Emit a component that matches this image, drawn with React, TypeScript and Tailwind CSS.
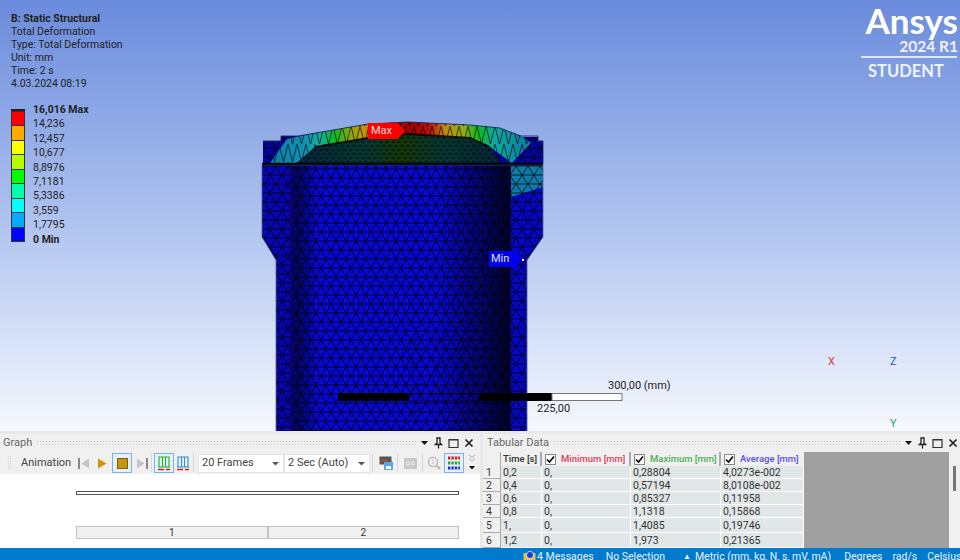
const uiFont = "font-['Roboto','Noto_Sans',sans-serif]";

const legendColors = [
  'bg-[#ff0000]',
  'bg-[#ffaa00]',
  'bg-[#ffff00]',
  'bg-[#b4ff00]',
  'bg-[#00ff00]',
  'bg-[#00ffaa]',
  'bg-[#00ffff]',
  'bg-[#00aaff]',
  'bg-[#0000ff]',
];

const legendLabels = ['14,236', '12,457', '10,677', '8,8976', '7,1181', '5,3386', '3,559', '1,7795'];

const rows = [
  { n: '1', time: '0,2', min: '0,', max: '0,28804', avg: '4,0273e-002', h: 'h-[13px] leading-[14px]' },
  { n: '2', time: '0,4', min: '0,', max: '0,57194', avg: '8,0108e-002', h: 'h-[13px] leading-[14px]' },
  { n: '3', time: '0,6', min: '0,', max: '0,85327', avg: '0,11958', h: 'h-[13px] leading-[14px]' },
  { n: '4', time: '0,8', min: '0,', max: '1,1318', avg: '0,15868', h: 'h-[13px] leading-[14px]' },
  { n: '5', time: '1,', min: '0,', max: '1,4085', avg: '0,19746', h: 'h-[15px] leading-[16px]' },
  { n: '6', time: '1,2', min: '0,', max: '1,973', avg: '0,21365', h: 'h-[15px] leading-[16px]' },
];

function Model() {
  const body = 'M262 165H543V237L527 260V431H276V260L262 237Z';
  const capBase = 'M263 141H281V136H298L310 134L368 124L408 122L470 125L500 128L520 137H538V141H543V164H263Z';
  const band = 'M270 163L287 139L310 134L368 124L408 122L470 125L500 128L520 135L531 143L512 163L490 147L470 139L408 135L368 139L315 147L297 163Z';
  const dome = 'M297 163L315 147L368 139L408 135L470 139L490 147L500 163Z';
  return (
    <svg className="absolute inset-0 blur-[0.4px]" width="960" height="431" viewBox="0 0 960 431">
      <defs>
        <pattern id="meshBody" x="296" y="165" width="10" height="18" patternUnits="userSpaceOnUse">
          <path d="M0 4H10M0 13H10M0 4L5 13L10 4M5 13L2.2 18M5 13L7.8 18M2.2 0L0 4M7.8 0L10 4" stroke="#000" strokeOpacity="0.78" strokeWidth="1" fill="none" />
        </pattern>
        <pattern id="meshFine" width="6" height="8" patternUnits="userSpaceOnUse">
          <path d="M0 2H6M0 6H6M0 2L3 6L6 2M3 6L1.5 8M3 6L4.5 8M1.5 0L0 2M4.5 0L6 2" stroke="#000" strokeOpacity="0.75" strokeWidth="0.6" fill="none" />
        </pattern>
        <pattern id="meshLarge" width="12" height="18" patternUnits="userSpaceOnUse">
          <path d="M0 4H12M0 13H12M0 4L6 13L12 4M6 13L3.2 18M6 13L8.8 18M3.2 0L0 4M8.8 0L12 4" stroke="#000" strokeOpacity="0.8" strokeWidth="0.9" fill="none" />
        </pattern>
        <pattern id="meshFree" x="400" y="330" width="26" height="24" patternUnits="userSpaceOnUse">
          <path d="M3 2L13 10L8 22M13 10L23 5M13 10L22 21" stroke="#000" strokeOpacity="0.55" strokeWidth="0.8" fill="none" />
        </pattern>
        <pattern id="meshCap" width="9" height="18" patternUnits="userSpaceOnUse">
          <path d="M0 0L4.5 18L9 0" stroke="#000" strokeOpacity="0.7" strokeWidth="0.9" fill="none" />
        </pattern>
        <linearGradient id="bandColors" x1="270" x2="540" y1="0" y2="0" gradientUnits="userSpaceOnUse">
          <stop offset="0" stopColor="#0c7fa6" />
          <stop offset="0.13" stopColor="#1090b0" />
          <stop offset="0.185" stopColor="#10b0a0" />
          <stop offset="0.24" stopColor="#10b820" />
          <stop offset="0.3" stopColor="#8ca810" />
          <stop offset="0.35" stopColor="#c8920c" />
          <stop offset="0.4" stopColor="#c02008" />
          <stop offset="0.52" stopColor="#a00000" />
          <stop offset="0.59" stopColor="#b81008" />
          <stop offset="0.65" stopColor="#c08c10" />
          <stop offset="0.72" stopColor="#88b010" />
          <stop offset="0.77" stopColor="#10b820" />
          <stop offset="0.83" stopColor="#10a8a0" />
          <stop offset="0.96" stopColor="#0d7aa2" />
        </linearGradient>
        <linearGradient id="domeColors" x1="297" x2="500" y1="0" y2="0" gradientUnits="userSpaceOnUse">
          <stop offset="0" stopColor="#052c3e" />
          <stop offset="0.35" stopColor="#064038" />
          <stop offset="0.52" stopColor="#173e06" />
          <stop offset="0.7" stopColor="#064038" />
          <stop offset="1" stopColor="#052c3e" />
        </linearGradient>
        <linearGradient id="bodyShade" x1="262" x2="543" y1="0" y2="0" gradientUnits="userSpaceOnUse">
          <stop offset="0" stopColor="#000" stopOpacity="0.15" />
          <stop offset="0.09" stopColor="#000" stopOpacity="0.2" />
          <stop offset="0.125" stopColor="#000" stopOpacity="0.55" />
          <stop offset="0.2" stopColor="#000" stopOpacity="0" />
          <stop offset="0.62" stopColor="#000" stopOpacity="0" />
          <stop offset="0.882" stopColor="#000" stopOpacity="0.8" />
          <stop offset="0.888" stopColor="#000" stopOpacity="0.1" />
          <stop offset="1" stopColor="#000" stopOpacity="0.1" />
        </linearGradient>
      </defs>

      {/* body */}
      <path d={body} fill="#0808d4" />
      <path d={body} fill="url(#meshBody)" />
      <path d="M262 165H292V431H276V260L262 237Z" fill="#0808d4" />
      <path d="M262 165H292V431H276V260L262 237Z" fill="url(#meshLarge)" />
      <path d="M511 165H543V237L527 260V431H511Z" fill="#0808d4" />
      <path d="M511 165H543V237L527 260V431H511Z" fill="url(#meshLarge)" />
      <path d="M400 330H480V431H400Z" fill="url(#meshFree)" />
      <path d={body} fill="url(#bodyShade)" />
      <path d="M511 166H543V187L511 197Z" fill="#0f7aa6" />
      <path d="M511 166H543V187L511 197Z" fill="url(#meshLarge)" />
      <path d="M262 165H543V237L527 260V431M276 431V260L262 237V165" fill="none" stroke="#555d80" strokeWidth="0.8" />

      {/* cap */}
      <path d={capBase} fill="#05059c" />
      <path d={capBase} fill="url(#meshLarge)" />
      <path d={band} fill="url(#bandColors)" />
      <path d={band} fill="url(#meshCap)" />
      <path d={dome} fill="url(#domeColors)" />
      <path d={dome} fill="url(#meshFine)" />
      <path d="M315 147L368 138L408 134L470 138L490 147" fill="none" stroke="#000" strokeOpacity="0.85" strokeWidth="1.8" />
      <path d="M262 164H543" stroke="#000" strokeOpacity="0.9" strokeWidth="2.6" />
      <path d="M263 141H281V136H298L310 134L368 124L408 122L470 125L500 128L520 136H538V141H543V164" fill="none" stroke="#222a55" strokeWidth="0.9" />

      {/* scale bar */}
      <rect x="338" y="393" width="71" height="8" fill="#000" />
      <path d="M409 393.5H479M409 401H479" stroke="#000" strokeOpacity="0.7" />
      <rect x="479" y="393" width="73" height="8" fill="#000" />
      <rect x="552" y="393.5" width="70" height="7" fill="#fff" stroke="#777" strokeWidth="1" />
    </svg>
  );
}

function Legend() {
  return (
    <div className="absolute left-[11px] top-[103px] flex gap-[8px] text-[10.5px] leading-[14.4px] text-[#222]">
      <div className="mt-[6px] flex h-[133px] w-[14px] flex-col border-t-[2px] border-[#222] bg-[#333] p-[1px] pt-0">
        {legendColors.map((color) => (
          <div key={color} className={`${color} mt-[1px] flex-1`} />
        ))}
      </div>
      <div className="flex flex-col">
        <span className="font-bold">16,016 Max</span>
        {legendLabels.map((label) => (
          <span key={label}>{label}</span>
        ))}
        <span className="font-bold">0 Min</span>
      </div>
    </div>
  );
}

function PaneButtons() {
  return (
    <div className="flex items-center gap-[5px] text-[#222]">
      <svg width="9" height="12" viewBox="0 0 9 12"><path d="M1 4H8L4.5 8Z" fill="#111" /></svg>
      <svg width="9" height="12" viewBox="0 0 9 12"><path d="M3 1H6V6L7.5 7.5H1.5L3 6ZM4.5 7.5V11.5" fill="none" stroke="#222" strokeWidth="1.3" /></svg>
      <svg width="11" height="12" viewBox="0 0 11 12"><path d="M1 2.5H10V10.5H1ZM1 3H10" fill="none" stroke="#333" strokeWidth="1.2" /></svg>
      <svg width="10" height="12" viewBox="0 0 10 12"><path d="M1.5 2.5L8.5 9.5M8.5 2.5L1.5 9.5" stroke="#222" strokeWidth="1.7" /></svg>
    </div>
  );
}

function PaneHeader({ title, padRight }: { title: string; padRight: string }) {
  return (
    <div className={`${padRight} flex h-[18px] items-center gap-[4px] bg-[#f0f0f0] text-[11px] text-[#666]`}>
      <span>{title}</span>
      <div className="h-[6px] flex-1 bg-[radial-gradient(#c4c4c4_40%,transparent_45%)] bg-[length:3px_3px]" />
      <PaneButtons />
    </div>
  );
}

function ToolbarDivider() {
  return <div className="h-[18px] w-px bg-[#d8d8d8]" />;
}

function FrameSelect({ label }: { label: string }) {
  return (
    <div className="flex h-[19px] w-[86px] items-center justify-between border border-[#e4e4e4] bg-white pl-[3px] pr-[4px] text-[11px] text-[#444]">
      <span>{label}</span>
      <svg width="7" height="5" viewBox="0 0 7 5"><path d="M0 1H7L3.5 4.5Z" fill="#555" /></svg>
    </div>
  );
}

function Toolbar() {
  return (
    <div className="flex h-[22px] items-center bg-[#f0f0f0] pl-[7px] text-[#444]">
      <div className="h-[16px] w-[5px] bg-[radial-gradient(#bdbdbd_40%,transparent_45%)] bg-[length:2.5px_2.5px]" />
      <span className="ml-[9px] w-[55px] text-[11px]">Animation</span>
      <svg className="ml-[1px]" width="14" height="13" viewBox="0 0 14 13"><path d="M2 1V12" stroke="#888" strokeWidth="2" /><path d="M12 1.5V11.5L4.5 6.5Z" fill="#c4c4c4" /></svg>
      <svg className="ml-[6px]" width="11" height="13" viewBox="0 0 11 13"><path d="M1 1.5V11.5L9.5 6.5Z" fill="#d09510" /></svg>
      <div className="ml-[4px] flex h-[20px] w-[20px] items-center justify-center border border-[#7db4e8] bg-[#e6f0fa]">
        <div className="h-[11px] w-[11px] border border-[#7a6010] bg-[#c8960c]" />
      </div>
      <svg className="ml-[3px]" width="14" height="13" viewBox="0 0 14 13"><path d="M2 1.5V11.5L9.5 6.5Z" fill="#c4c4c4" /><path d="M12 1V12" stroke="#888" strokeWidth="2" /></svg>
      <div className="ml-[2px]"><ToolbarDivider /></div>
      <div className="ml-[2px] flex h-[20px] w-[20px] items-center justify-center border border-[#7db4e8] bg-[#e6f0fa]">
        <svg width="14" height="15" viewBox="0 0 14 15">
          <path d="M1.5 1H12.5M2 1V11M5.5 1V11M8.5 1V11M12 1V11M1 11H13" fill="none" stroke="#20b030" strokeWidth="1.1" />
          <path d="M1 13.5H7M9 13.5H13" stroke="#d02020" strokeWidth="1.4" />
        </svg>
      </div>
      <svg className="ml-[2px]" width="14" height="15" viewBox="0 0 14 15">
        <path d="M1.5 1H12.5M2 1V11M5.5 1V11M8.5 1V11M12 1V11M1 11H13" fill="none" stroke="#2a8ed8" strokeWidth="1.1" />
        <path d="M1 13.5H7M9 13.5H13" stroke="#d02020" strokeWidth="1.4" />
      </svg>
      <div className="ml-[3px]"><ToolbarDivider /></div>
      <div className="ml-[4px] flex">
        <FrameSelect label="20 Frames" />
        <FrameSelect label="2 Sec (Auto)" />
      </div>
      <div className="ml-[2px]"><ToolbarDivider /></div>
      <svg className="ml-[6px]" width="14" height="14" viewBox="0 0 14 14">
        <rect x="0.5" y="0.5" width="12" height="8" fill="#555" />
        <path d="M2 6C4 2 6 6 8 4" fill="none" stroke="#e04040" strokeWidth="1.4" />
        <rect x="5" y="6" width="9" height="8" fill="#5aa8e8" />
        <rect x="7" y="10" width="5" height="3" fill="#fff" />
      </svg>
      <div className="ml-[4px]"><ToolbarDivider /></div>
      <svg className="ml-[6px]" width="13" height="11" viewBox="0 0 13 11">
        <rect width="13" height="11" rx="1" fill="#c8c8c8" />
        <circle cx="4" cy="5.5" r="1.6" fill="none" stroke="#f0f0f0" />
        <circle cx="9" cy="5.5" r="1.6" fill="none" stroke="#f0f0f0" />
      </svg>
      <div className="ml-[5px]"><ToolbarDivider /></div>
      <svg className="ml-[4px]" width="14" height="14" viewBox="0 0 14 14">
        <circle cx="6" cy="6" r="4.6" fill="none" stroke="#b8b8b8" strokeWidth="1.4" />
        <path d="M9.5 9.5L13 13" stroke="#b8b8b8" strokeWidth="2" />
        <path d="M6 3.5V8.5" stroke="#c8c8c8" />
      </svg>
      <div className="ml-[3px] flex h-[20px] w-[20px] items-center justify-center border border-[#7db4e8] bg-[#e6f0fa]">
        <svg width="14" height="14" viewBox="0 0 14 14">
          <path d="M1 2H13" stroke="#d02020" strokeWidth="3" strokeDasharray="2.4 1" />
          <path d="M1 7H13" stroke="#20b030" strokeWidth="3" strokeDasharray="2.4 1" />
          <path d="M1 12H13" stroke="#2030d0" strokeWidth="3" strokeDasharray="2.4 1" />
        </svg>
      </div>
      <svg className="ml-[4px]" width="8" height="18" viewBox="0 0 8 18">
        <path d="M1 1L4 3.5L7 1M1 4.5L4 7L7 4.5" fill="none" stroke="#aaa" />
        <path d="M1 12H7L4 15.5Z" fill="#111" />
      </svg>
    </div>
  );
}

function GraphPanel() {
  return (
    <div className="flex w-[480px] flex-col pl-[3px]">
      <PaneHeader title="Graph" padRight="pr-[6px]" />
      <div className="-ml-[3px]">
        <Toolbar />
      </div>
      <div className="-ml-[3px] flex flex-1 flex-col bg-white pl-[76px] pr-[21px] pt-[17px]">
        <div className="h-[4px] border border-[#555] bg-white" />
        <div className="mt-[31px] flex h-[13px] border border-[#c4c4c4] bg-[#f0f0f0] text-[10px] leading-[11px] text-[#333]">
          <div className="flex-1 border-r-2 border-[#c4c4c4] text-center">1</div>
          <div className="flex-1 text-center">2</div>
        </div>
      </div>
    </div>
  );
}

function HeaderCheck() {
  return (
    <div className="flex h-[11px] w-[11px] shrink-0 items-center justify-center border border-[#888] bg-white">
      <svg width="9" height="9" viewBox="0 0 9 9"><path d="M1 4.5L3.5 7L8 1.5" fill="none" stroke="#000" strokeWidth="1.6" /></svg>
    </div>
  );
}

function TabularPanel() {
  const cols = 'grid grid-cols-[18px_41px_89px_90px_83px]';
  const cell = 'overflow-hidden whitespace-nowrap border-b border-r border-white bg-[#e1e6e6] pl-[2px]';
  return (
    <div className="flex w-[480px] flex-col border-l-[3px] border-[#e8e8e8] bg-[#f0f0f0]">
      <div className="pl-[4px]">
        <PaneHeader title="Tabular Data" padRight="pr-[2px]" />
      </div>
      <div className="flex flex-1 overflow-hidden">
        <div className="flex w-[466px] flex-col bg-[#a0a0a0]">
          <div className="flex h-[15px] w-[321px] whitespace-nowrap bg-[#f0f0f0] text-[9.5px] leading-[14px] text-[#333]">
            <div className="w-[18px] border-r border-[#aaa]" />
            <div className="w-[41px] border-r-2 border-[#aaa] pl-[2px] font-medium">Time [s]</div>
            <div className="flex w-[89px] items-center gap-[5px] border-r-2 border-[#aaa] pl-[3px] font-medium text-[#e0405a]">
              <HeaderCheck />
              <span>Minimum [mm]</span>
            </div>
            <div className="flex w-[90px] items-center gap-[5px] border-r-2 border-[#aaa] pl-[3px] font-medium text-[#4caf50]">
              <HeaderCheck />
              <span>Maximum [mm]</span>
            </div>
            <div className="flex w-[83px] items-center gap-[5px] pl-[3px] font-medium text-[#5a50e8]">
              <HeaderCheck />
              <span>Average [mm]</span>
            </div>
          </div>
          {rows.map((row) => (
            <div key={row.n} className={`${cols} ${row.h} w-[321px] text-[10.5px] text-[#333]`}>
              <div className="overflow-hidden border-b border-r border-[#aaa] bg-[#f0f0f0] pl-[3px]">{row.n}</div>
              <div className={cell}>{row.time}</div>
              <div className={cell}>{row.min}</div>
              <div className={cell}>{row.max}</div>
              <div className={cell}>{row.avg}</div>
            </div>
          ))}
        </div>
        <div className="flex w-[11px] justify-center bg-[#f0f0f0] pt-[14px]">
          <div className="h-[25px] w-[3px] bg-[#777]" />
        </div>
      </div>
    </div>
  );
}

function StatusBar() {
  return (
    <div className="h-[12px] overflow-hidden bg-[#007acc] text-[10.5px] leading-[14px] text-[#e8f2fa]">
      <div className="flex h-[14px] items-start whitespace-nowrap pl-[523px] pt-[2px]">
        <svg className="mt-[1px] shrink-0" width="13" height="11" viewBox="0 0 13 11">
          <rect x="0.5" y="2" width="12" height="9" fill="#e8c040" />
          <circle cx="7" cy="4" r="3.6" fill="#2040c8" stroke="#fff" strokeWidth="0.7" />
        </svg>
        <span className="ml-[1px]">4 Messages</span>
        <span className="ml-[12px]">No Selection</span>
        <span className="ml-[18px] text-[8px]">▲</span>
        <span className="ml-[4px]">Metric (mm, kg, N, s, mV, mA)</span>
        <span className="ml-[13px]">Degrees</span>
        <span className="ml-[10px]">rad/s</span>
        <span className="ml-[10px]">Celsius</span>
      </div>
    </div>
  );
}

export default function App() {
  return (
    <div className={`${uiFont} flex h-[560px] w-[960px] flex-col overflow-hidden bg-[#f0f0f0]`}>
      {/* Viewport */}
      <div className="relative h-[431px] bg-gradient-to-b from-[#6a8bdc] to-[#f6f8fd]">
        <Model />

        <div className="absolute left-[11px] top-[12px] flex flex-col text-[10.5px] leading-[13px] text-[#222]">
          <span className="font-bold">B: Static Structural</span>
          <span>Total Deformation</span>
          <span>Type: Total Deformation</span>
          <span>Unit: mm</span>
          <span>Time: 2 s</span>
          <span>4.03.2024 08:19</span>
        </div>

        <Legend />

        <div className="absolute left-[368px] top-[123px] flex h-[16px] w-[37px] items-center bg-[#ff0000] pl-[3px] text-[11px] text-[#ffdcdc] [clip-path:polygon(0_0,80%_0,100%_50%,80%_100%,0_100%)]">
          Max
        </div>
        <div className="absolute left-[489px] top-[251px] flex h-[16px] w-[33px] items-center bg-[#0000f0] pl-[2px] text-[11px] text-[#dfe4ff] [clip-path:polygon(0_0,82%_0,100%_50%,82%_100%,0_100%)]">
          Min
        </div>
        <div className="absolute left-[522px] top-[259px] h-[2px] w-[2px] bg-white" />

        <span className="absolute left-[608px] top-[379px] text-[11px] leading-[14px] text-[#222]">300,00 (mm)</span>
        <span className="absolute left-[537px] top-[402px] text-[11px] leading-[14px] text-[#222]">225,00</span>

        <span className="absolute left-[828px] top-[355px] text-[11px] leading-[14px] text-[#e04040]">X</span>
        <span className="absolute left-[890px] top-[355px] text-[11px] leading-[14px] text-[#2f55c8]">Z</span>
        <span className="absolute left-[890px] top-[417px] text-[11px] leading-[14px] text-[#20a860]">Y</span>

        {/* Logo */}
        <div className="absolute left-[861px] top-[2px] flex w-[97px] flex-col text-white">
          <span className="h-[36px] self-end whitespace-nowrap font-['Lato',sans-serif] text-[35px] font-bold leading-[36px]">Ansys</span>
          <span className="mt-[1px] self-end whitespace-nowrap font-['Lato',sans-serif] text-[15.5px] font-bold leading-[14px] text-[#eef2fc]">2024 R1</span>
          <div className="mt-[3px] h-[2px] w-[96px] bg-[#dfe6f8]" />
          <span className="mt-[3px] whitespace-nowrap pl-[7px] font-['Lato',sans-serif] text-[16.5px] font-bold leading-[20px] text-[#eef2fc]">STUDENT</span>
        </div>
      </div>

      {/* Bottom panes */}
      <div className="flex h-[117px] flex-col">
        <div className="h-[3px] bg-[#e8e8e8]" />
        <div className="flex flex-1 overflow-hidden">
          <GraphPanel />
          <TabularPanel />
        </div>
      </div>

      <StatusBar />
    </div>
  );
}
